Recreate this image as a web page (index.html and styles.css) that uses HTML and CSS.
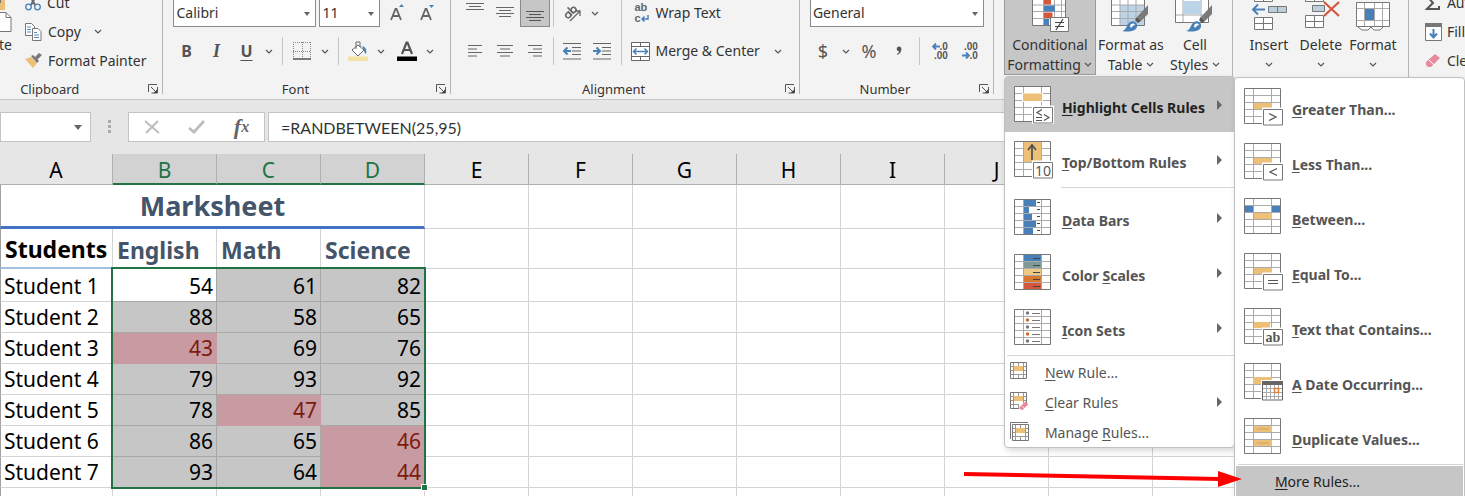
FILE: index.html
```html
<!DOCTYPE html>
<html lang="en">
<head>
<meta charset="utf-8">
<title>Marksheet</title>
<link rel="stylesheet" href="styles.css">
</head>
<body>
<svg class="defs" aria-hidden="true">
  <symbol id="chev" viewBox="0 0 8 5"><path d="M1 1l3 3 3-3" fill="none" stroke="#555" stroke-width="1.2"/></symbol>
  <symbol id="launch" viewBox="0 0 10 10"><path d="M.5 8V.5H9M3 3l5 5M9.500 3v6H3.500" fill="none" stroke="#555"/><path d="M5.500 9H9V5.500z" fill="#444"/></symbol>
  <symbol id="grid" viewBox="0 0 40 38"><path d="M.5.5h36v35H.5z" fill="#fff" stroke="#777"/><path d="M9.500 1v34M27.500 1v34M1 7.500h35M1 14.500h35M1 21.500h35M1 28.500h35" stroke="#aaa" fill="none"/></symbol>
  <symbol id="badge" viewBox="0 0 40 38"><path d="M18 19.500h22V38H18z" fill="#fff"/><path d="M19.500 21.500h19v15.500h-19z" fill="#fff" stroke="#777"/></symbol>
  <symbol id="brush" viewBox="0 0 28 28"><path d="M27 1v9l-7 7-4-4z" fill="#7a7a7a"/><path d="M16 13l4 4-3 2-3-3z" fill="#555"/><path d="M1 27c5-1 4-6 8-9 4-2 8 1 7 5-2 5-9 5-15 4z" fill="#4a80b8"/><path d="M9 22c1-3 4-3 5-1-2 0-3 2-4 3z" fill="#fff"/></symbol>
  <symbol id="smallgrid" viewBox="0 0 19 19"><path d="M.5.5h16v16H.5z" fill="#fff" stroke="#777"/><path d="M1 4.500h15M1 12.500h15M3.500 1v15M13.500 1v15M8.500 1v3M8.500 12v4M1 8.500h2M14 8.500h2" stroke="#999" fill="none"/><path d="M4 4h9v5H4z" fill="#edbf77"/></symbol>
  <symbol id="eraser" viewBox="0 0 16 16"><path d="M1 9L10 1l5 4-9 9H3L1 12z" fill="#e8899c"/><path d="M4 7l5 5" stroke="#fff"/></symbol>
</svg>

<header class="ribbon">
  <section class="group clipboard">
    <div class="body">
      <button class="paste"><svg width="46" height="44" viewBox="0 -12 46 44"><path d="M12-12h27V10H12z" fill="#edbf77"/><path d="M25-8h10V3H25z" fill="#777"/><path d="M22 12.500h18l5 5v14H22z" fill="#fff" stroke="#777"/><path d="M40 12.500v5h5" fill="none" stroke="#777"/></svg><span>Paste</span></button>
      <div class="stack">
        <button class="tool"><svg width="16" height="18" viewBox="0 0 16 18"><path d="M4 0l6 11M12 0L6 11" stroke="#666" stroke-width="2"/><circle cx="3.500" cy="13" r="2.800" fill="none" stroke="#4a80b8" stroke-width="1.300"/><circle cx="12.500" cy="13" r="2.800" fill="none" stroke="#4a80b8" stroke-width="1.300"/></svg>Cut</button>
        <button class="tool"><svg width="17" height="18" viewBox="0 0 17 18"><path d="M.5.5h6l3 3v9h-9z" fill="#fff" stroke="#777"/><path d="M7.500 5.500h5.500l3 3v9H7.500z" fill="#fff" stroke="#777"/><path d="M2 4h4M2 6.500h4M2 9h4M9 9.500h3M9 12h5M9 14.500h5" stroke="#5b8cc0"/></svg>Copy<svg class="chev copychev"><use href="#chev"/></svg></button>
        <button class="tool"><svg width="17" height="16" viewBox="0 0 17 16"><path d="M0 6l6-2 6 6-4 5z" fill="#edbf77"/><path d="M6 3l2-1 6 6-2 2z" fill="#777"/><path d="M10 4l4-4 3 2-5 5z" fill="#777"/></svg>Format Painter</button>
      </div>
    </div>
    <div class="caption">Clipboard<button class="launch" aria-label="Clipboard settings"><svg width="10" height="10"><use href="#launch"/></svg></button></div>
  </section>

  <section class="group font">
    <div class="body rows">
      <div class="row combos">
        <label class="combo name"><select aria-label="Font"><option>Calibri</option></select></label>
        <label class="combo size"><select aria-label="Font size"><option>11</option></select></label>
        <button class="icon" aria-label="Grow font"><svg width="18" height="20" viewBox="0 0 18 20"><path d="M3 17L7.500 6h1L13 17M5 13h6" fill="none" stroke="#666" stroke-width="1.800"/><path d="M11 4l2.500-3L16 4z" fill="#4a80b8"/></svg></button>
        <button class="icon" aria-label="Shrink font"><svg width="18" height="20" viewBox="0 0 18 20"><path d="M3 17L7.500 6h1L13 17M5 13h6" fill="none" stroke="#666" stroke-width="1.800"/><path d="M11 2l2.500 3L16 2z" fill="#4a80b8"/></svg></button>
      </div>
      <div class="row">
        <button class="icon letter"><b>B</b></button><button class="icon letter italic"><b>I</b></button><button class="icon letter under"><b>U</b></button><button class="drop" aria-label="Underline options"><svg class="chev"><use href="#chev"/></svg></button>
        <i class="sep"></i>
        <button class="icon" aria-label="Borders"><svg width="18" height="18" viewBox="0 0 18 18"><path d="M.5 0v17M17.500 0v17M0 .5h18M9.500 0v17M0 9.500h18" stroke="#888" stroke-dasharray="1 1" fill="none"/><path d="M0 17h18" stroke="#555" stroke-width="1.500"/></svg></button><button class="drop" aria-label="Border options"><svg class="chev"><use href="#chev"/></svg></button>
        <i class="sep"></i>
        <button class="icon" aria-label="Fill color"><svg width="20" height="20" viewBox="0 0 20 20"><path d="M4 9l6-5 6 5-6 6z" fill="#fff" stroke="#666"/><path d="M8 8V1h4v5" fill="none" stroke="#666"/><path d="M14 5c4 1 5 4 4 8-1-1-2-2-2-4z" fill="#4a80b8"/><path d="M0 15.500h20v5H0z" fill="#f3e3a1"/></svg></button><button class="drop" aria-label="Fill options"><svg class="chev"><use href="#chev"/></svg></button>
        <button class="icon colour" aria-label="Font color"><svg width="20" height="20" viewBox="0 0 20 20"><path d="M5 13L9.500 1.500h1L15 13M6.500 9h7" fill="none" stroke="#555" stroke-width="2.200"/><path d="M0 15.500h20v5H0z"/></svg></button><button class="drop" aria-label="Font color options"><svg class="chev"><use href="#chev"/></svg></button>
      </div>
    </div>
    <div class="caption">Font<button class="launch" aria-label="Font settings"><svg width="10" height="10"><use href="#launch"/></svg></button></div>
  </section>

  <section class="group align">
    <div class="body">
      <div class="rows">
        <div class="row combos">
          <button class="icon" aria-label="Top align"><svg width="18" height="20" viewBox="0 0 18 20"><path d="M0 .5h18M3 3.500h12M0 6.500h18" stroke="#666"/></svg></button><button class="icon" aria-label="Middle align"><svg width="18" height="20" viewBox="0 0 18 20"><path d="M0 4.500h18M3 7.500h12M0 10.500h18M3 13.500h12" stroke="#666"/></svg></button><button class="icon on" aria-label="Bottom align"><svg width="18" height="20" viewBox="0 0 18 20"><path d="M0 8.500h18M3 11.500h12M0 14.500h18M3 17.500h12" stroke="#555"/></svg></button>
          <i class="sep"></i>
          <button class="icon" aria-label="Orientation"><svg width="20" height="20" viewBox="0 0 20 20"><g transform="rotate(-45 8 9)" fill="none" stroke="#666" stroke-width="1.500"><path d="M7 7v6M13 8"/><circle cx="4.500" cy="10" r="2.500"/><path d="M9.500 4v9"/><circle cx="12" cy="10" r="2.500"/></g><path d="M8 18L18 8M13 8h5v5" fill="none" stroke="#666" stroke-width="1.300"/></svg></button><button class="drop" aria-label="Orientation options"><svg class="chev"><use href="#chev"/></svg></button>
        </div>
        <div class="row">
          <button class="icon" aria-label="Align left"><svg width="14" height="12" viewBox="0 0 14 12"><path d="M0 .5h14M0 4h9M0 7.500h14M0 11h9" stroke="#666"/></svg></button><button class="icon" aria-label="Center"><svg width="16" height="12" viewBox="0 0 16 12"><path d="M0 .5h16M3 4h10M0 7.500h16M3 11h10" stroke="#666"/></svg></button><button class="icon" aria-label="Align right"><svg width="14" height="12" viewBox="0 0 14 12"><path d="M0 .5h14M5 4h9M0 7.500h14M5 11h9" stroke="#666"/></svg></button>
          <i class="sep"></i>
          <button class="icon" aria-label="Decrease indent"><svg width="18" height="17" viewBox="0 0 18 17"><path d="M0 .5h18M9 4.500h9M9 8h9M9 11.500h9M0 16h18" stroke="#666"/><path d="M1 8h7M4.500 4.500L1 8l3.500 3.500" fill="none" stroke="#4a80b8" stroke-width="2"/></svg></button><button class="icon" aria-label="Increase indent"><svg width="18" height="17" viewBox="0 0 18 17"><path d="M0 .5h18M9 4.500h9M9 8h9M9 11.500h9M0 16h18" stroke="#666"/><path d="M0 8h7M3.500 4.500L7 8l-3.500 3.500" fill="none" stroke="#4a80b8" stroke-width="2"/></svg></button>
        </div>
      </div>
      <i class="sep tall"></i>
      <div class="rows">
        <div class="row combos"><button class="tool wide"><span class="abc"><span>ab</span><span>c<svg width="8" height="7" viewBox="0 0 8 7"><path d="M7 0v4H1M3.500 1.500L1 4l2.500 2.500" fill="none" stroke="#4a80b8" stroke-width="1.500"/></svg></span></span>Wrap Text</button></div>
        <div class="row"><button class="tool wide"><svg width="19" height="19" viewBox="0 0 19 19"><path d="M.5.500h18v18H.500zM.500 4.500h18M.500 14.500h18M9.500.500v4M9.500 14.500v4" fill="#fff" stroke="#666"/><path d="M2.500 9.500h14M5.500 6.500l-3 3 3 3M13.500 6.500l3 3-3 3" fill="none" stroke="#4a80b8" stroke-width="1.500"/></svg>Merge &amp; Center</button><button class="drop mergedrop" aria-label="Merge options"><svg class="chev"><use href="#chev"/></svg></button></div>
      </div>
    </div>
    <div class="caption">Alignment<button class="launch" aria-label="Alignment settings"><svg width="10" height="10"><use href="#launch"/></svg></button></div>
  </section>

  <section class="group number">
    <div class="body rows">
      <div class="row combos"><label class="combo format"><select aria-label="Number format"><option>General</option></select></label></div>
      <div class="row">
        <button class="icon sign">$</button><button class="drop" aria-label="Currency options"><svg class="chev"><use href="#chev"/></svg></button><button class="icon sign">%</button><button class="icon sign" aria-label="Comma style"><svg width="6" height="10" viewBox="0 0 8 12"><path d="M4 0c5 0 4 9-2 11l-1-1c2-1 3-2 3-4C0 7 0 0 4 0z" fill="#555"/></svg></button>
        <i class="sep"></i>
        <button class="icon decimals"><span><svg width="8" height="7" viewBox="0 0 8 7"><path d="M8 3.500H1M4 .5l-3 3 3 3" fill="none" stroke="#4a80b8" stroke-width="1.800"/></svg>.0</span><span>.00</span></button><button class="icon decimals"><span>.00</span><span><svg width="8" height="7" viewBox="0 0 8 7"><path d="M0 3.500h7M4 .5l3 3-3 3" fill="none" stroke="#4a80b8" stroke-width="1.800"/></svg>.0</span></button>
      </div>
    </div>
    <div class="caption">Number<button class="launch" aria-label="Number settings"><svg width="10" height="10"><use href="#launch"/></svg></button></div>
  </section>

  <section class="group styles">
    <div class="body">
      <div class="dropdown">
        <button class="big open"><svg width="38" height="44" viewBox="0 -12 38 44"><path d="M1.500-8.500h33v34h-33z" fill="#fff" stroke="#777"/><path d="M12.500-8v33M23.500-8v33M30.500-8v33M2-1.500h32M2 5h32M2 11.500h32M2 18.500h32" stroke="#aaa"/><path d="M13-1h7v5.500h-7zM13 12.500h8.500v5.500H13z" fill="#d5573b"/><path d="M13 5.500h11v6H13zM13 19h5v6h-5z" fill="#4a80b8"/><path d="M19.500 17.500h18v14h-18z" fill="#fff" stroke="#777"/><path d="M24 22.500h9M24 26.500h9M32 19l-7 11" stroke="#444" stroke-width="1.200"/></svg><span>Conditional<br>Formatting <svg class="chev"><use href="#chev"/></svg></span></button>
        <ul class="menu">
          <li><button class="item hot"><svg width="40" height="38"><use href="#grid"/><path d="M8 7h21v9H8z" fill="#fff"/><path d="M9 7.500h19v7.500H9z" fill="#edbf77"/><use href="#badge"/><path d="M28 23.500l-5 3 5 3M30 28.500l5 3-5 3M22 31.500h6M22 34.500h6" fill="none" stroke="#555" stroke-width="1.200"/></svg><span><u>H</u>ighlight Cells Rules</span><i class="arrow"></i></button>
            <ul class="menu submenu">
              <li><button class="item"><svg width="40" height="38"><use href="#grid"/><path d="M10 15h18v6H10z" fill="#edbf77"/><use href="#badge"/><path d="M25 25.500l7 3.500-7 3.500" fill="none" stroke="#555" stroke-width="1.200"/></svg><span><u>G</u>reater Than...</span></button></li>
              <li><button class="item"><svg width="40" height="38"><use href="#grid"/><path d="M10 15h18v6H10z" fill="#edbf77"/><use href="#badge"/><path d="M33 25.500L26 29l7 3.500" fill="none" stroke="#555" stroke-width="1.200"/></svg><span><u>L</u>ess Than...</span></button></li>
              <li><button class="item"><svg width="40" height="38"><use href="#grid"/><path d="M1 8h8v6H1zM28 8h8v6h-8z" fill="#4a80b8"/><path d="M10 15h18v6H10z" fill="#edbf77"/></svg><span><u>B</u>etween...</span></button></li>
              <li><button class="item"><svg width="40" height="38"><use href="#grid"/><path d="M10 15h18v6H10z" fill="#edbf77"/><use href="#badge"/><path d="M24 27.500h10M24 30.500h10" stroke="#555"/></svg><span><u>E</u>qual To...</span></button></li>
              <li><button class="item"><svg width="40" height="38"><use href="#grid"/><path d="M10 14h16v6H10z" fill="#edbf77"/><use href="#badge"/><text x="29" y="34" text-anchor="middle" class="serif">ab</text></svg><span><u>T</u>ext that Contains...</span></button></li>
              <li><button class="item"><svg width="40" height="38"><use href="#grid"/><path d="M9 14h19v7H9z" fill="#edbf77"/><path d="M17 17h23v21H17z" fill="#fff"/><path d="M18.500 18.500h20v18.500h-20z" fill="#fff" stroke="#666"/><path d="M18 18h21v4H18z" fill="#666"/><path d="M22.500 22v15M26.500 22v15M30.500 22v15M34.500 22v15M19 25.500h19M19 29.500h19M19 33.500h19" stroke="#aaa"/><path d="M30.500 25.500h4v4h-4z" fill="#fff" stroke="#d9833f" stroke-width="1.500"/></svg><span><u>A</u> Date Occurring...</span></button></li>
              <li><button class="item"><svg width="40" height="38"><use href="#grid"/><path d="M10 8h18v6H10zM10 22h18v6H10z" fill="#edbf77"/><path d="M13 11h12M13 25h12" stroke="#c9a26a"/></svg><span><u>D</u>uplicate Values...</span></button></li>
              <li class="rule"></li>
              <li><button class="item small hot"><span><u>M</u>ore Rules...</span></button></li>
            </ul>
          </li>
          <li><button class="item"><svg width="40" height="38"><use href="#grid"/><path d="M10 1h17v20H10z" fill="#edbf77"/><path d="M18 19V4M14 9l4-5 4 5" fill="none" stroke="#555" stroke-width="1.800"/><use href="#badge"/><text x="29" y="35" text-anchor="middle" class="ten">10</text></svg><span><u>T</u>op/Bottom Rules</span><i class="arrow"></i></button></li>
          <li class="rule inset"></li>
          <li><button class="item"><svg width="40" height="38"><use href="#grid"/><path d="M10 1h12v6H10zM10 8h5v6h-5zM10 15h8v6h-8zM10 22h12v6H10zM10 29h9v6h-9z" fill="#4a80b8"/><path d="M22 1h5v6h-5zM15 8h12v6H15zM18 15h9v6h-9zM22 22h5v6h-5zM19 29h8v6h-8z" fill="#fff"/><path d="M23 3.500h3M23 10.500h3M23 17.500h3M23 24.500h3M23 31.500h3" stroke="#444"/></svg><span><u>D</u>ata Bars</span><i class="arrow"></i></button></li>
          <li><button class="item"><svg width="40" height="38"><use href="#grid"/><path d="M10 1h17v6H10z" fill="#4a80b8"/><path d="M10 8h17v6H10z" fill="#7d9a97"/><path d="M10 15h17v6H10z" fill="#edc984"/><path d="M10 22h17v6H10z" fill="#d9762f"/><path d="M10 29h17v6H10z" fill="#d5573b"/><path d="M19 4.500h7M19 11.500h7M19 18.500h7M19 25.500h7M19 32.500h7" stroke="#444"/></svg><span>Color <u>S</u>cales</span><i class="arrow"></i></button></li>
          <li><button class="item"><svg width="40" height="38"><use href="#grid"/><g fill="#777"><circle cx="13.500" cy="4" r="1.700"/><circle cx="13.500" cy="18" r="1.700"/><circle cx="13.500" cy="32" r="1.700"/></g><g fill="#cf6a26"><circle cx="13.500" cy="11" r="1.700"/><circle cx="13.500" cy="25" r="1.700"/></g><path d="M18 4.500h8M18 11.500h8M18 18.500h8M18 25.500h8M18 32.500h8" stroke="#777"/></svg><span><u>I</u>con Sets</span><i class="arrow"></i></button></li>
          <li class="rule"></li>
          <li><button class="item small"><svg width="20" height="20"><use href="#smallgrid" width="19" height="19"/></svg><span><u>N</u>ew Rule...</span></button></li>
          <li><button class="item small"><svg width="20" height="20"><use href="#smallgrid" width="19" height="19"/><path d="M9 11h10v9H9z" fill="#fff"/><use href="#eraser" x="9" y="9" width="10" height="10"/></svg><span><u>C</u>lear Rules</span><i class="arrow"></i></button></li>
          <li><button class="item small"><svg width="20" height="20"><path d="M.5 17V.5H18" fill="none" stroke="#777"/><use href="#smallgrid" x="2" y="2" width="19" height="19"/></svg><span>Manage <u>R</u>ules...</span></button></li>
        </ul>
      </div>
      <button class="big table"><svg width="40" height="44" viewBox="0 -12 40 44"><path d="M.5-8.500h33v34H.5z" fill="#fff" stroke="#777"/><path d="M9 5h24v20H9z" fill="#bcd3e8"/><path d="M9-8v33M17-8v33M25-8v33M1-1.500h32M1 5h32M1 11.500h32M1 18.500h32" stroke="#aaa"/><use href="#brush" x="10" y="4" width="28" height="28"/></svg><span>Format as<br>Table <svg class="chev"><use href="#chev"/></svg></span></button>
      <button class="big cell"><svg width="40" height="44" viewBox="0 -12 40 44"><path d="M.5-8.500h33v31H.5z" fill="#fff" stroke="#777"/><path d="M8-8v30M26-8v30M1-.5h32M1 15h32" stroke="#aaa"/><path d="M8 1h18v13H8z" fill="#bcd3e8"/><use href="#brush" x="10" y="4" width="28" height="28"/></svg><span>Cell<br>Styles <svg class="chev"><use href="#chev"/></svg></span></button>
    </div>
  </section>

  <section class="group cells">
    <div class="body">
      <button class="big"><svg width="38" height="44" viewBox="0 -12 38 44"><path d="M4.500-6.500h18v8h-18zM13.500-6.500v8M4.500 17.500h18v12h-18zM4.500 23.500h18M13.500 17.500v12" fill="#fff" stroke="#777"/><path d="M18.500 6.500h18v6h-18zM27.500 6.500v6" fill="#bcd0dc" stroke="#777"/><path d="M15 9.500H3M8 4.500l-5 5 5 5" fill="none" stroke="#4a80b8" stroke-width="2"/></svg><span>Insert<br><svg class="chev"><use href="#chev"/></svg></span></button>
      <button class="big"><svg width="38" height="44" viewBox="0 -12 38 44"><path d="M3.500-6.500h18v8h-18zM12.500-6.500v8M3.500 15.500h18v12h-18zM3.500 21.500h18M12.500 15.500v12" fill="#fff" stroke="#777"/><path d="M10.500 5.500h12v6h-12z" fill="#bcd0dc" stroke="#777"/><path d="M22 2l15 14M37 2L22 16" stroke="#d5573b" stroke-width="2.200"/></svg><span>Delete<br><svg class="chev"><use href="#chev"/></svg></span></button>
      <button class="big"><svg width="38" height="44" viewBox="0 -12 38 44"><path d="M4 27l4 3h6l3-3 3 3h6l3-3" fill="#fff" stroke="#777"/><path d="M2.500 2.500h33v24h-33z" fill="#fff" stroke="#777"/><path d="M10.500 3v23M20.500 3v23M28.500 3v23M3 8.500h32M3 20.500h32" stroke="#aaa"/><path d="M11 9h9v11h-9z" fill="#4a80b8"/></svg><span>Format<br><svg class="chev"><use href="#chev"/></svg></span></button>
    </div>
  </section>

  <section class="group editing">
    <div class="body">
      <div class="stack">
        <button class="tool"><svg width="17" height="16" viewBox="0 0 17 16"><path d="M14 4V1H2l6 7-6 6h12v-3" fill="none" stroke="#555" stroke-width="2"/></svg>AutoSum</button>
        <button class="tool"><svg width="17" height="18" viewBox="0 0 17 18"><path d="M.5.5h16v17H.5z" fill="#fff" stroke="#777"/><path d="M0 0h17v4H0z" fill="#777"/><path d="M8.500 6v8M5 10.500l3.500 4 3.500-4" fill="none" stroke="#4a80b8" stroke-width="2"/></svg>Fill</button>
        <button class="tool"><svg width="17" height="16"><use href="#eraser" width="16" height="16"/></svg>Clear</button>
      </div>
    </div>
  </section>
</header>

<div class="formula-bar">
  <label class="combo namebox"><input aria-label="Name box"></label>
  <svg class="grip" width="4" height="14" viewBox="0 0 4 14"><path d="M0 0h3v3H0zM0 5h3v3H0zM0 10h3v3H0z" fill="#aaa"/></svg>
  <div class="entry">
    <button aria-label="Cancel"><svg width="16" height="14" viewBox="0 0 16 14"><path d="M1 1l14 12M14 1L2 13" stroke="#bdbdbd" stroke-width="2"/></svg></button>
    <button aria-label="Enter"><svg width="17" height="14" viewBox="0 0 17 14"><path d="M1 8l5 4L16 1" fill="none" stroke="#bdbdbd" stroke-width="2.800"/></svg></button>
    <button class="fx"><span>f</span>x</button>
  </div>
  <input class="formula" aria-label="Formula" value="=RANDBETWEEN(25,95)">
</div>

<main class="sheet">
  <table>
    <colgroup><col class="first"><col span="13"></colgroup>
    <thead><tr><th>A</th><th class="picked">B</th><th class="picked">C</th><th class="picked">D</th><th>E</th><th>F</th><th>G</th><th>H</th><th>I</th><th>J</th><th></th><th></th><th></th><th></th></tr></thead>
    <tbody>
      <tr class="title"><td colspan="4">Marksheet</td><td></td><td></td><td></td><td></td><td></td><td></td><td></td><td></td><td></td><td></td></tr>
      <tr class="heads"><td class="students">Students</td><td>English</td><td>Math</td><td>Science</td><td></td><td></td><td></td><td></td><td></td><td></td><td></td><td></td><td></td><td></td></tr>
      <tr class="lead"><td>Student 1</td><td class="num active">54<i class="selection"></i></td><td class="num">61</td><td class="num">82</td><td></td><td></td><td></td><td></td><td></td><td></td><td></td><td></td><td></td><td></td></tr>
      <tr><td>Student 2</td><td class="num">88</td><td class="num">58</td><td class="num">65</td><td></td><td></td><td></td><td></td><td></td><td></td><td></td><td></td><td></td><td></td></tr>
      <tr><td>Student 3</td><td class="num low">43</td><td class="num">69</td><td class="num">76</td><td></td><td></td><td></td><td></td><td></td><td></td><td></td><td></td><td></td><td></td></tr>
      <tr><td>Student 4</td><td class="num">79</td><td class="num">93</td><td class="num">92</td><td></td><td></td><td></td><td></td><td></td><td></td><td></td><td></td><td></td><td></td></tr>
      <tr><td>Student 5</td><td class="num">78</td><td class="num low">47</td><td class="num">85</td><td></td><td></td><td></td><td></td><td></td><td></td><td></td><td></td><td></td><td></td></tr>
      <tr><td>Student 6</td><td class="num">86</td><td class="num">65</td><td class="num low">46</td><td></td><td></td><td></td><td></td><td></td><td></td><td></td><td></td><td></td><td></td></tr>
      <tr><td>Student 7</td><td class="num">93</td><td class="num">64</td><td class="num low">44</td><td></td><td></td><td></td><td></td><td></td><td></td><td></td><td></td><td></td><td></td></tr>
      <tr><td></td><td></td><td></td><td></td><td></td><td></td><td></td><td></td><td></td><td></td><td></td><td></td><td></td><td></td></tr>
    </tbody>
  </table>
</main>
<svg class="pointer" width="278" height="22" viewBox="0 0 278 22" aria-hidden="true"><path d="M0 6l256 5" stroke="#f00" stroke-width="4"/><path d="M254 3l24 8-24 8z" fill="#f00"/></svg>
</body>
</html>
```
FILE: styles.css
```css
* { box-sizing: border-box; }
html, body { height: 100%; overflow: hidden; }
body { margin: 0; background: #fff; color: #333; font: 14px/20px "Noto Sans", "Open Sans", sans-serif; display: flex; flex-direction: column; }
button, input, select { font: inherit; color: inherit; border: 0; margin: 0; padding: 0; background: none; }
svg { flex: none; }
.defs { position: absolute; width: 0; height: 0; }

/* Ribbon, scrolled slightly past its top edge */
.ribbon { display: flex; flex: none; margin-top: -12px; background: #f3f3f3; border-bottom: 1px solid #c8c8c8; position: relative; z-index: 2; white-space: nowrap; }
.group { flex: none; display: flex; flex-direction: column; position: relative; padding-bottom: 1px; }
.group::after { content: ""; position: absolute; right: 0; top: 0; bottom: 5px; width: 1px; background: #b5b5b5; }
.editing { flex: 1; min-width: 0; overflow: hidden; }
.editing::after { display: none; }
.body { display: flex; height: 92px; }
.caption { position: relative; text-align: center; line-height: 18px; font-size: 13px; padding-right: 44px; padding-left: 20px; }
.clipboard .caption { padding: 0 64px 0 0; }
.launch { position: absolute; right: 5px; top: 4px; width: 10px; height: 10px; display: flex; }
.stack { display: flex; flex-direction: column; padding-right: 17px; }
.tool { display: flex; align-items: center; gap: 6px; height: 29px; }
.chev { width: 8px; height: 5px; }
.copychev { margin-left: 7px; }
.paste { width: 12px; margin-right: 13px; overflow: hidden; display: flex; flex-direction: column; align-items: flex-end; gap: 3px; }
.rows { flex-direction: column; }
.row { display: flex; align-items: center; height: 40px; }
.row.combos { height: 28px; margin: 11px 0 4px; }
.font .body { padding: 0 11px 0 8px; }
.font .combos { gap: 3px; padding-left: 2px; }
.font .combos .icon { width: 27px; }
.combo { position: relative; display: block; height: 28px; background: #fff; border: 1px solid #8a8a8a; }
.combo select, .combo input { appearance: none; width: 100%; height: 26px; padding-left: 2px; }
.combo::after { content: ""; position: absolute; right: 5px; top: 12px; border: 3px solid transparent; border-top: 4px solid #666; border-bottom: 0; }
.name { width: 143px; }
.size { width: 61px; }
.format { width: 174px; margin-left: 10px; }
.icon { width: 30px; height: 28px; display: flex; align-items: center; justify-content: center; }
.drop { width: 16px; height: 28px; display: flex; align-items: center; justify-content: center; }
.sep { width: 1px; height: 28px; background: #c6c6c6; margin: 0 4px 0 5px; }
.sep.tall { height: 66px; margin: 11px 9px 0 4px; }
.letter { font-size: 16px; color: #555; }
.italic { font-family: "Liberation Serif", serif; font-style: italic; font-size: 18px; }
.under { text-decoration: underline; text-underline-offset: 3px; }
.colour { margin-left: 3px; }
.align .body { padding-left: 9px; }
.align .sep:not(.tall) { margin: 0 3px; }
.on { background: #c6c6c6; border: 1px solid #8a8a8a; }
.wide { gap: 5px; }
.abc { display: flex; flex-direction: column; width: 19px; padding-left: 3px; font: 700 11px/11px "Liberation Sans", sans-serif; color: #666; }
.abc span { display: flex; align-items: center; }
.mergedrop { margin: 0 14px 0 10px; }
.number .row:last-child { padding: 0 10px 0 8px; }
.sign { font-size: 18px; color: #555; }
.decimals { flex-direction: column; align-items: flex-end; padding-right: 6px; font: 700 10px/9px "Liberation Sans", sans-serif; color: #555; }
.decimals span { display: flex; align-items: center; }
.styles { padding-left: 10px; }
.dropdown { position: relative; }
.big { display: flex; flex-direction: column; align-items: center; height: 87px; gap: 3px; }
.big .chev { vertical-align: 3px; }
.big.open { width: 92px; background: #c6c6c6; border: 1px solid #999; border-top: 0; }
.table { width: 70px; }
.cell { width: 58px; margin-right: 9px; }
.cells .body { padding: 0 10px; }
.cells .big { width: 52px; }
.editing .stack { padding-left: 16px; }
.editing .tool { gap: 5px; }

/* Menus */
.menu { position: absolute; left: 0; top: 88px; width: 231px; margin: 0; padding: 0; list-style: none; background: #fff; border: 1px solid #c0c0c0; border-radius: 4px; box-shadow: 2px 3px 6px rgba(0, 0, 0, .15); z-index: 3; }
.menu li { position: relative; }
.menu .submenu { left: 229px; top: 0; padding: 1px 1px 4px; }
.item { display: flex; align-items: center; width: 100%; height: 55px; padding-left: 9px; gap: 8px; text-align: left; color: #555; font-weight: 700; }
.item span { flex: 1; padding-top: 6px; }
.submenu .item { padding-left: 8px; }
.item.hot { background: #c6c6c6; color: #222; }
.item.small { height: 30px; font-weight: 400; padding-left: 5px; gap: 15px; }
.item.small span { padding-top: 2px; }
.submenu .item.small { padding-left: 39px; }
.item u { text-underline-offset: 2px; }
.arrow { width: 0; height: 0; border: 5px solid transparent; border-left-color: #666; border-right: 0; margin-right: 12px; }
.rule { height: 1px; background: #d5d5d5; margin: 0 0 1px 2px; }
.rule.inset { margin: 0 0 2px 56px; }
.serif { font: 700 14px "Liberation Serif", serif; fill: #555; }
.ten { font: 14px "Noto Sans", sans-serif; fill: #555; }

/* Formula bar */
.formula-bar { flex: none; display: flex; align-items: center; padding: 12px 0; background: #e6e6e6; }
.formula-bar .combo, .entry, .formula { height: 30px; background: #fff; border: 1px solid #c3c3c3; }
.namebox { width: 91px; border-left: 0; }
.formula-bar .namebox::after { right: 8px; border-width: 5px 4px 0; }
.grip { margin: 0 19px 0 17px; }
.entry { display: flex; width: 137px; margin: 0 3px 0 -3px; }
.entry button { flex: 1; display: flex; align-items: center; justify-content: center; }
.entry .fx { font: italic 700 16px "Liberation Serif", serif; color: #666; }
.fx span { font-size: 22px; }
.formula-bar .formula { flex: 1; padding-left: 12px; font: 16px Lato, sans-serif; }

/* Worksheet */
.sheet { flex: 1; overflow: hidden; font: 21px/24px "Noto Sans", sans-serif; color: #000; }
table { table-layout: fixed; border-collapse: separate; border-spacing: 0; width: 1465px; min-width: 100%; }
col { width: 104px; }
col.first { width: 113px; }
th, td { border: 0 solid #d4d4d4; border-width: 0 1px 1px 0; height: 31px; padding: 0 3px; white-space: nowrap; text-align: left; }
td:first-child { border-left: 1px solid #a0a0a0; }
th { padding-top: 2px; background: #e6e6e6; border-color: #b0b0b0; font-weight: 400; text-align: center; }
th.picked { background: #d2d2d2; color: #217346; border-bottom: 2px solid #217346; }
.title td { height: 44px; }
.title td:first-child { font-size: 27px; font-weight: 700; line-height: 36px; color: #44546a; text-align: center; border-bottom: 3px solid #4472c4; }
.heads td { height: 40px; padding: 2px 0 0 4px; font-size: 23px; line-height: 32px; font-weight: 700; color: #44546a; }
.heads .students { color: #000; border-bottom: 2px solid #a3bfdf; }
.lead td { height: 33px; padding-top: 2px; }
.num { position: relative; text-align: right; background: #c6c6c6; border-color: #a8a8a8; }
.num.active { background: #fff; }
.num.low { background: #c89ba3; border-color: #c89ba3; color: #7c1a0c; }
.selection { position: absolute; left: -2px; top: -2px; width: 315px; height: 222px; border: 2px solid #217346; z-index: 1; }
.selection::after { content: ""; position: absolute; right: -4px; bottom: -4px; width: 5px; height: 5px; background: #217346; border: 1px solid #fff; box-sizing: content-box; }
.pointer { position: absolute; left: 964px; top: 468px; z-index: 5; }
```
